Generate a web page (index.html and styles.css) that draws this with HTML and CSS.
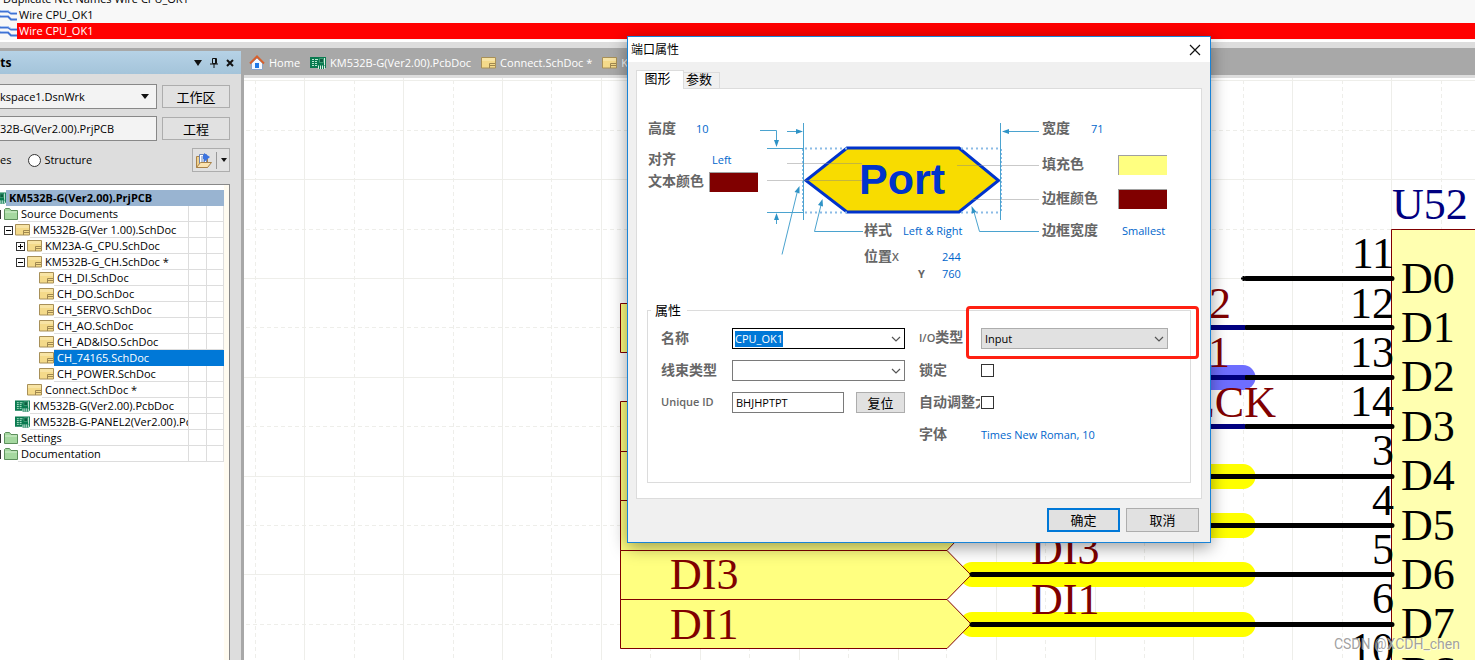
FILE: index.html
```
<!DOCTYPE html>
<html lang="zh-CN">
<head>
  <meta charset="utf-8">
  <title>端口属性</title>
  <link rel="stylesheet" href="styles.css">
</head>
<body>
  <!-- shared icons -->
  <svg class="sprite" aria-hidden="true">
    <symbol id="i-sch" viewBox="0 0 15 12">
      <path d="M.5.5h14v10.500H.5z" fill="#f4da8a" stroke="#a89058"/>
      <path d="M1 1h13v3H1z" fill="#f8e4a4"/>
      <path d="M8.500 11V6.500H14M9 8.500h5" fill="none" stroke="#a08850"/>
    </symbol>
    <symbol id="i-folder" viewBox="0 0 15 12">
      <path d="M1.500 11.500v-10l1-1h4l1.500 2h6.500v9z" fill="#a5d8a0" stroke="#5c8f5c"/>
      <path d="M2 4h12" stroke="#d4efd0"/>
    </symbol>
    <symbol id="i-pcb" viewBox="0 0 16 12">
      <path d="M0 0h16v11h-1v1H8v-1H0z" fill="#0a7a50"/>
      <path d="M2 2.500h2M2 4.500h2M2 6.500h2M2 8.500h2M5 2.500h3M5 4.500h2M5 6.500h2M5 8.500h2" stroke="#b8e8d0"/>
      <path d="M9.500 1.500h4v4h-4z" fill="#0c5c40" stroke="#3c9c74"/>
      <path d="M14.500 1v7" stroke="#d8f0e4"/>
      <path d="M8.500 8.500v3.500M10.500 8.500v3.500M12.500 8.500v3.500M14.500 8.500v3.500" stroke="#d8f0e4"/>
    </symbol>
    <symbol id="i-wire" viewBox="0 0 17 12">
      <path d="M0 2.500h8l3 2h6M0 7.500h8l3 3h6" fill="none" stroke="#3f72d4" stroke-width="2"/>
      <path d="M1 1.500h7l3 2h6M1 6.500h7" fill="none" stroke="#a8c4f4"/>
    </symbol>
    <symbol id="i-chevron" viewBox="0 0 10 6">
      <path d="M1 1l4 4 4-4" fill="none" stroke="#555" stroke-width="1.200"/>
    </symbol>
  </svg>

  <ul class="messages">
    <li class="first">Duplicate Net Names Wire CPU_OK1</li>
    <li><svg class="wire"><use href="#i-wire"/></svg><span>Wire CPU_OK1</span></li>
    <li class="error"><svg class="wire"><use href="#i-wire"/></svg><span>Wire CPU_OK1</span></li>
  </ul>

  <div class="workspace">
    <aside class="sidebar">
      <header class="panel-head">
        <h2>cts</h2>
        <button type="button" aria-label="Menu"><svg width="8" height="6"><path d="M0 0h8L4 6z" fill="#111"/></svg></button>
        <button type="button" aria-label="Pin"><svg width="8" height="10"><path d="M2.500.5h4v5h-4zM0 6h8M4 6v4M5.500 1v5" fill="none" stroke="#111"/></svg></button>
        <button type="button" aria-label="Close"><svg width="8" height="8"><path d="M1 1l6 6M7 1L1 7" stroke="#111" stroke-width="2"/></svg></button>
      </header>

      <div class="project-bar">
        <label class="combo">
          <select aria-label="Workspace"><option>kspace1.DsnWrk</option></select>
          <svg width="8" height="5"><path d="M0 0h8L4 5z" fill="#111"/></svg>
        </label>
        <button type="button" class="btn">工作区</button>
        <input type="text" class="project-name" value="32B-G(Ver2.00).PrjPCB" aria-label="Project">
        <button type="button" class="btn">工程</button>
      </div>

      <div class="view-bar">
        <span>es</span>
        <label><input type="radio" name="view"> Structure</label>
        <button type="button" class="open-btn" aria-label="Open">
          <svg width="18" height="17" viewBox="0 0 18 17">
            <path d="M1.500 15.500v-11h3l1 2h7v9z" fill="#f1d18c" stroke="#a8824a"/>
            <path d="M4.500 2.500h7v10h-7z" fill="#fff" stroke="#6d86b8"/>
            <path d="M6 5h4M6 7h4M6 9h4" stroke="#6d86b8"/>
            <path d="M9 3V1l6 4-6 5V7H8V3z" fill="#3c74e0"/>
            <path d="M1.500 15.500l4-5h11l-4 5z" fill="#fbe3b0" stroke="#a8824a"/>
          </svg>
          <i></i>
          <svg width="6" height="4"><path d="M0 0h6L3 4z" fill="#111"/></svg>
        </button>
      </div>

      <ul class="tree">
        <li class="root"><b></b><svg class="ico"><use href="#i-pcb"/></svg><span class="name">KM532B-G(Ver2.00).PrjPCB</span></li>
        <li class="l1"><b class="tg minus"></b><svg class="ico"><use href="#i-folder"/></svg><span class="name">Source Documents</span><i></i><i></i></li>
        <li class="l2"><b class="tg minus"></b><svg class="ico"><use href="#i-sch"/></svg><span class="name">KM532B-G(Ver 1.00).SchDoc</span><i></i><i></i></li>
        <li class="l3"><b class="tg plus"></b><svg class="ico"><use href="#i-sch"/></svg><span class="name">KM23A-G_CPU.SchDoc</span><i></i><i></i></li>
        <li class="l3"><b class="tg minus"></b><svg class="ico"><use href="#i-sch"/></svg><span class="name">KM532B-G_CH.SchDoc *</span><i></i><i></i></li>
        <li class="l4"><b></b><svg class="ico"><use href="#i-sch"/></svg><span class="name">CH_DI.SchDoc</span><i></i><i></i></li>
        <li class="l4"><b></b><svg class="ico"><use href="#i-sch"/></svg><span class="name">CH_DO.SchDoc</span><i></i><i></i></li>
        <li class="l4"><b></b><svg class="ico"><use href="#i-sch"/></svg><span class="name">CH_SERVO.SchDoc</span><i></i><i></i></li>
        <li class="l4"><b></b><svg class="ico"><use href="#i-sch"/></svg><span class="name">CH_AO.SchDoc</span><i></i><i></i></li>
        <li class="l4"><b></b><svg class="ico"><use href="#i-sch"/></svg><span class="name">CH_AD&amp;ISO.SchDoc</span><i></i><i></i></li>
        <li class="l4 selected"><b></b><svg class="ico"><use href="#i-sch"/></svg><span class="name">CH_74165.SchDoc</span></li>
        <li class="l4"><b></b><svg class="ico"><use href="#i-sch"/></svg><span class="name">CH_POWER.SchDoc</span><i></i><i></i></li>
        <li class="l3"><b></b><svg class="ico"><use href="#i-sch"/></svg><span class="name">Connect.SchDoc *</span><i></i><i></i></li>
        <li class="l2"><b></b><svg class="ico"><use href="#i-pcb"/></svg><span class="name">KM532B-G(Ver2.00).PcbDoc</span><i></i><i></i></li>
        <li class="l2"><b></b><svg class="ico"><use href="#i-pcb"/></svg><span class="name">KM532B-G-PANEL2(Ver2.00).PcbDoc</span><i></i><i></i></li>
        <li class="l1"><b class="tg plus"></b><svg class="ico"><use href="#i-folder"/></svg><span class="name">Settings</span><i></i><i></i></li>
        <li class="l1"><b class="tg plus"></b><svg class="ico"><use href="#i-folder"/></svg><span class="name">Documentation</span><i></i><i></i></li>
      </ul>
    </aside>

    <div class="splitter"></div>

    <main class="editor">
      <nav class="doc-tabs">
        <a href="#">
          <svg width="16" height="16" viewBox="0 0 16 16">
            <path d="M2.500 8v6.500h11V8L8 3z" fill="#f4f8ff" stroke="#8aa4c8"/>
            <path d="M6 8h4v5H6z" fill="#1e78e8"/>
            <path d="M1 8.500L8 1.500l7 7" fill="none" stroke="#d8602c" stroke-width="2"/>
          </svg>Home</a>
        <a href="#"><svg width="16" height="12"><use href="#i-pcb"/></svg>KM532B-G(Ver2.00).PcbDoc</a>
        <a href="#"><svg width="15" height="12"><use href="#i-sch"/></svg>Connect.SchDoc *</a>
        <a href="#"><svg width="15" height="12"><use href="#i-sch"/></svg>KM532B-G_CH.SchDoc *</a>
      </nav>

      <svg class="sheet" viewBox="244 78 1231 582" preserveAspectRatio="xMinYMin slice">
        <!-- grid -->
        <path class="grid" d="M244 80.500H1475M244 179.500H1475M244 278.500H1475M244 377.500H1475M244 476.500H1475M244 574.500H1475M304.500 78V660M403.500 78V660M502.500 78V660M601.500 78V660M700.500 78V660M799.500 78V660M898.500 78V660M996.500 78V660M1095.500 78V660M1193.500 78V660M1292.500 78V660M1391.500 78V660"/>
        <path class="grid dash" d="M246 130.500H1475M246 229.500H1475M246 327.500H1475M246 426.500H1475M246 525.500H1475M246 624.500H1475M255.500 80V660M354.500 80V660M453.500 80V660M551.500 80V660M650.500 80V660M749.500 80V660M848.500 80V660M946.500 80V660M1045.500 80V660M1144.500 80V660M1243.500 80V660M1342.500 80V660M1441.500 80V660"/>

        <!-- net highlights -->
        <path class="glow" d="M972 476.500H1243M972 525.500H1243M972 574.500H1243M972 624.500H1243"/>
        <path class="glow picked" d="M972 377.500H1243"/>

        <!-- ports -->
        <path class="port" d="M620.500 303.500H947L971 328 947 352.500H620.500zM620.500 401.500H947L971 426 947 451.500H620.500zM620.500 451.500H947L971 476 947 500.500H620.500zM620.500 500.500H947L971 525 947 550.500H620.500zM620.500 550.500H947L971 575 947 599.500H620.500zM620.500 599.500H947L971 624 947 648.500H620.500z"/>
        <g class="net">
          <text x="670" y="589">DI3</text>
          <text x="670" y="639">DI1</text>
        </g>

        <!-- component -->
        <path class="body" d="M1391.500 229.500H1500V700H1391.500z"/>
        <text class="refdes" x="1392" y="219">U52</text>
        <path class="pin" d="M1246 278.500H1392M1246 327.500H1392M1246 377.500H1392M1246 426.500H1392M972 476.500H1392M972 525.500H1392M972 574.500H1392M972 624.500H1392"/>
        <path d="M1241 278.500h6M1243.500 276v5" stroke="#000" stroke-width="2"/>
        <path class="wire-line" d="M972 327.500H1245M972 377.500H1245M972 426.500H1245"/>
        <g class="pin-no">
          <text x="1394" y="268">11</text>
          <text x="1394" y="318">12</text>
          <text x="1394" y="367">13</text>
          <text x="1394" y="416">14</text>
          <text x="1394" y="465">3</text>
          <text x="1394" y="515">4</text>
          <text x="1394" y="564">5</text>
          <text x="1394" y="613">6</text>
          <text x="1394" y="663">10</text>
        </g>
        <g class="pin-name">
          <text x="1401" y="293">D0</text>
          <text x="1401" y="342">D1</text>
          <text x="1401" y="391">D2</text>
          <text x="1401" y="441">D3</text>
          <text x="1401" y="490">D4</text>
          <text x="1401" y="540">D5</text>
          <text x="1401" y="589">D6</text>
          <text x="1401" y="638">D7</text>
          <text x="1401" y="687">DS</text>
        </g>
        <g class="net">
          <text x="1031" y="564">DI3</text>
          <text x="1031" y="614">DI1</text>
          <text x="1231" y="318" text-anchor="end">2</text>
          <text x="1230" y="367" text-anchor="end">1</text>
          <text x="1276" y="417" text-anchor="end">CLCK</text>
        </g>
      </svg>
    </main>
  </div>

  <form class="dialog" role="dialog" aria-labelledby="dialog-title">
    <header class="dialog-head">
      <h1 id="dialog-title">端口属性</h1>
      <button type="button" aria-label="关闭"><svg width="12" height="12"><path d="M1 1l10 10M11 1L1 11" stroke="#111" stroke-width="1.200"/></svg></button>
    </header>

    <div class="dialog-tabs">
      <button type="button" class="tab active">图形</button>
      <button type="button" class="tab">参数</button>
    </div>

    <div class="page">
      <div class="graphic">
        <div class="props left">
          <div><span class="lbl">高度</span><a href="#">10</a></div>
          <div><span class="lbl">对齐</span><a href="#">Left</a></div>
          <div><span class="lbl">文本颜色</span><button type="button" class="swatch maroon" aria-label="文本颜色"></button></div>
        </div>

        <svg class="diagram" viewBox="758 89 284 200">
          <path d="M847 148H959L998.500 180.500 959 212H847L806 180.500z" fill="#f8dc00" stroke="#03c" stroke-width="3"/>
          <path d="M787 163.500H862M767 180.500H862M957 165.500H1039M972 199.500H1039" stroke="#888" stroke-opacity=".45" fill="none"/>
          <text class="port-text" x="859" y="194">Port</text>
          <path d="M805 148.500H847M805 212.500H847M961 148.500H1000M961 212.500H1000" stroke="#8bbbe6" stroke-width="2" stroke-dasharray="2 3"/>
          <path d="M803 149V212M1001 149V212" stroke="#8bbbe6" stroke-width="2" stroke-dasharray="2 2"/>
          <g fill="none" stroke="#4ba3cf">
            <path d="M760 130.500H776.500V142M787 131.500H797M767 148.500H803M767 212.500H803M776.500 224V219M803.500 123V220M1000.500 123V220M1039 131.500H1008"/>
            <path d="M782 254.500L797 193M863 231.500H814.500L821 205M1039 231.500H979.500L974 212"/>
          </g>
          <path fill="#2f93c6" d="M774 140h5l-2.500 7zM796 129l7 2.500-7 2.500zM774 220h5l-2.500-7zM1009 129l-7 2.500 7 2.500zM799.500 186l-5 6 5 1.500zM822.500 199l-4.500 6 5 1.500zM971.500 206l.5 7.500 4.500-1.500z"/>
          <text class="cap" x="864" y="235">样式</text>
          <text class="val" x="903" y="235">Left &amp; Right</text>
          <text class="cap" x="864" y="261">位置<tspan class="latin">X</tspan></text>
          <text class="val" x="942" y="261">244</text>
          <text class="cap latin" x="918" y="278">Y</text>
          <text class="val" x="942" y="278">760</text>
        </svg>

        <div class="props right">
          <div><span class="lbl">宽度</span><a href="#">71</a></div>
          <div><span class="lbl">填充色</span><button type="button" class="swatch yellow" aria-label="填充色"></button></div>
          <div><span class="lbl">边框颜色</span><button type="button" class="swatch maroon" aria-label="边框颜色"></button></div>
          <div><span class="lbl">边框宽度</span><a href="#">Smallest</a></div>
        </div>
      </div>

      <fieldset>
        <legend>属性</legend>
        <div class="fields">
          <label class="lbl" for="port-name">名称</label>
          <div class="combo-edit focused">
            <input type="text" id="port-name" value="CPU_OK1">
            <svg width="10" height="6"><use href="#i-chevron"/></svg>
          </div>
          <label class="lbl" for="harness">线束类型</label>
          <div class="combo-edit">
            <input type="text" id="harness">
            <svg width="10" height="6"><use href="#i-chevron"/></svg>
          </div>
          <label class="lbl latin" for="uid">Unique ID</label>
          <div class="uid-row">
            <input type="text" id="uid" value="BHJHPTPT">
            <button type="button" class="btn">复位</button>
          </div>
        </div>
        <div class="fields second">
          <label class="lbl" for="io-type"><span class="latin">I/O</span>类型</label>
          <div class="io-select">
            <select id="io-type"><option>Input</option></select>
            <svg width="10" height="6"><use href="#i-chevron"/></svg>
          </div>
          <label class="lbl" for="locked">锁定</label>
          <input type="checkbox" id="locked">
          <label class="lbl" for="autosize">自动调整大小</label>
          <input type="checkbox" id="autosize">
          <span class="lbl">字体</span>
          <a href="#">Times New Roman, 10</a>
        </div>
        <div class="marker"></div>
      </fieldset>
    </div>

    <footer>
      <button type="button" class="btn default">确定</button>
      <button type="button" class="btn">取消</button>
    </footer>
  </form>

  <div class="watermark">CSDN @XCDH_chen</div>

  <script>
    document.getElementById('port-name').select();
  </script>
</body>
</html>
```
FILE: styles.css
```
* {
  box-sizing: border-box;
}
body {
  margin: 0;
  height: 100vh;
  display: flex;
  flex-direction: column;
  overflow: hidden;
  background: #ddd;
  font: 11px/16px "Open Sans", "Noto Sans CJK SC", sans-serif;
  color: #000;
}
ul {
  margin: 0;
  padding: 0;
  list-style: none;
}
button, input, select {
  font: inherit;
  color: inherit;
  margin: 0;
  padding: 0;
  border-radius: 0;
}
a {
  color: #06c;
  text-decoration: none;
}
.sprite {
  display: none;
}

/* messages */
.messages {
  height: 42px;
  flex: none;
  overflow: hidden;
  background: #f8f8f8;
  border-bottom: 2px solid #fff;
}
.messages li {
  display: flex;
  height: 16px;
}
.messages .first {
  margin-top: -9px;
  padding-left: 3px;
}
.messages span {
  flex: 1;
  padding-left: 2px;
}
.messages .error span {
  background: #f00;
  color: #fff;
}
.wire {
  width: 17px;
  height: 12px;
  margin-top: 2px;
}

.workspace {
  flex: 1;
  min-height: 0;
  display: flex;
  margin-top: 6px;
}

/* projects panel */
.sidebar {
  width: 241px;
  flex: none;
  display: flex;
  flex-direction: column;
  overflow: hidden;
  border-top: 3px solid #a8a8a8;
}
.panel-head {
  display: flex;
  align-items: center;
  gap: 8px;
  height: 23px;
  padding-right: 7px;
  background: linear-gradient(#b6d2e6, #a4c4da);
}
.panel-head h2 {
  flex: 1;
  margin: 0 0 0 -6px;
  font-size: 12px;
}
.panel-head button {
  display: flex;
  border: 0;
  background: none;
}
.project-bar {
  display: grid;
  grid-template-columns: 157px 68px;
  align-items: center;
  gap: 7px 5px;
  padding-top: 10px;
}
.btn {
  height: 23px;
  border: 1px solid #adadad;
  background: #e1e1e1;
  font-size: 13px;
  line-height: 18px;
}
.combo {
  display: flex;
  align-items: center;
  height: 25px;
  padding-right: 7px;
  border: 1px solid #888;
  border-left: 0;
  background: #f3f3f3;
}
.combo select {
  flex: 1;
  appearance: none;
  border: 0;
  background: none;
}
.project-name {
  width: 157px;
  height: 25px;
  border: 1px solid #888;
  border-left: 0;
  background: #f3f3f3;
}
.view-bar {
  display: flex;
  align-items: center;
  height: 24px;
  margin: 7px 11px 12px 0;
}
.view-bar label {
  display: flex;
  align-items: center;
  gap: 3px;
  margin-left: 17px;
}
.view-bar input {
  appearance: none;
  width: 13px;
  height: 13px;
  border: 1px solid #333;
  border-radius: 50%;
  background: #fff;
}
.open-btn {
  display: flex;
  align-items: center;
  gap: 4px;
  width: 38px;
  height: 24px;
  margin-left: auto;
  padding-left: 2px;
  border: 1px solid #adadad;
  background: #e1e1e1;
}
.open-btn i {
  width: 1px;
  height: 17px;
  margin-left: -1px;
  background: #999;
}
.tree {
  flex: 1;
  width: 250px;
  margin-left: -20px;
  padding-top: 5px;
  border-top: 1px solid #888;
  border-right: 1px solid #888;
  background: linear-gradient(90deg, #fff 244px, #fffbf0 244px);
}
.tree li {
  display: flex;
  align-items: center;
  height: 16px;
  width: 244px;
}
.tree b {
  width: 9px;
  height: 9px;
  margin-right: 2px;
}
.tree .tg {
  border: 1px solid #333;
  background: linear-gradient(#000, #000) center / 5px 1px no-repeat #fff;
}
.tree .plus {
  background: linear-gradient(#000, #000) center / 5px 1px no-repeat, linear-gradient(#000, #000) center / 1px 5px no-repeat #fff;
}
.tree .ico {
  flex: none;
  width: 15px;
  height: 12px;
}
.tree .name {
  flex: 1;
  height: 16px;
  min-width: 0;
  padding-left: 3px;
  overflow: hidden;
  white-space: nowrap;
  border-bottom: 1px solid #ddd;
}
.tree i {
  width: 18px;
  height: 16px;
  border-left: 1px solid #ddd;
  border-bottom: 1px solid #ddd;
}
.tree i:last-child {
  border-right: 1px solid #ddd;
}
.tree .l1 {
  padding-left: 12px;
}
.tree .l2 {
  padding-left: 24px;
}
.tree .l3 {
  padding-left: 36px;
}
.tree .l4 {
  padding-left: 48px;
}
.tree .root .name {
  background: #99b4d1;
  border: 0;
  font-weight: bold;
}
.tree .selected .name {
  background: #0078d7;
  border: 0;
  color: #fff;
}
.splitter {
  width: 3px;
  background: #a8a8a8;
}

/* editor */
.editor {
  flex: 1;
  min-width: 0;
  display: flex;
  flex-direction: column;
}
.doc-tabs {
  flex: none;
  display: flex;
  gap: 10px;
  height: 30px;
  padding: 2px 0 0 5px;
  background: #a8a8a8;
  border-bottom: 3px solid #ddd;
  white-space: nowrap;
}
.doc-tabs a {
  display: flex;
  align-items: center;
  gap: 4px;
  color: #fff;
}
.sheet {
  flex: 1;
  width: 100%;
  min-height: 0;
  background: #fff;
  font-family: "Liberation Serif", serif;
  font-size: 44px;
}
.grid {
  fill: none;
  stroke: #eeeeea;
}
.dash {
  stroke-dasharray: 4 3;
}
.glow {
  stroke: #ff0;
  stroke-width: 25px;
  stroke-linecap: round;
}
.picked {
  stroke: #6e6eff;
}
.port {
  fill: #ffff80;
  stroke: #800000;
}
.body {
  fill: #ffffb0;
  stroke: #800000;
}
.refdes {
  fill: #000080;
}
.pin {
  stroke: #000;
  stroke-width: 5px;
  stroke-linecap: round;
}
.wire-line {
  stroke: #000080;
  stroke-width: 5px;
}
.pin-no {
  text-anchor: end;
}
.net {
  fill: #800000;
}

/* port dialog */
.dialog {
  position: absolute;
  left: 627px;
  top: 36px;
  width: 584px;
  border: 1px solid #1883d7;
  background: #f0f0f0;
  box-shadow: 0 4px 16px rgba(0, 0, 0, 0.4);
}
.dialog-head {
  display: flex;
  align-items: center;
  justify-content: space-between;
  height: 25px;
  padding: 0 9px 0 3px;
  background: #fff;
}
.dialog-head h1 {
  margin: 0;
  font-size: 12px;
  font-weight: normal;
}
.dialog-head button {
  display: flex;
  border: 0;
  background: none;
}
.dialog-tabs {
  display: flex;
  align-items: flex-end;
  height: 26px;
  padding-left: 8px;
}
.tab {
  width: 36px;
  height: 16px;
  padding: 0 5px 3px 0;
  border: 1px solid #dcdcdc;
  border-width: 1px 1px 0 0;
  background: #f0f0f0;
  font-size: 13px;
  line-height: 12px;
}
.tab.active {
  position: relative;
  width: 48px;
  height: 19px;
  margin-bottom: -1px;
  padding-bottom: 5px;
  border-left-width: 1px;
  background: #fff;
}
.page {
  margin: 0 8px;
  padding: 0 10px 15px;
  border: 1px solid #dcdcdc;
  background: #fff;
}
.graphic {
  display: flex;
  height: 211px;
  padding-left: 1px;
}
.props {
  padding-top: 30px;
}
.props div {
  display: flex;
  align-items: center;
  height: 20px;
}
.left {
  width: 110px;
}
.left .lbl {
  min-width: 48px;
}
.left div:nth-child(2) {
  margin: 11px 0 2px;
}
.left div:nth-child(2) a {
  margin-left: 16px;
}
.left .swatch {
  margin-left: 5px;
}
.right .lbl {
  width: 49px;
}
.right div:nth-child(2) {
  margin: 16px 0 14px;
}
.right div:nth-child(4) {
  margin-top: 12px;
}
.right .swatch {
  margin-left: 27px;
}
.right div:nth-child(4) a {
  margin-left: 31px;
}
.lbl {
  flex: none;
  padding-bottom: 2px;
  color: #666;
  font-size: 14px;
  font-weight: bold;
  white-space: nowrap;
}
.latin {
  font-size: 11px;
  font-weight: 600;
}
.swatch {
  width: 49px;
  height: 20px;
  border: 1px solid #a0a0a0;
  border-width: 1px 0 0 1px;
}
.maroon {
  background: #800000;
}
.yellow {
  background: #ffff80;
}
.diagram {
  flex: none;
  width: 284px;
  height: 200px;
}
.port-text {
  fill: #03c;
  font: bold 43px "Liberation Sans", sans-serif;
}
.cap {
  fill: #666;
  font-size: 14px;
  font-weight: bold;
}
.diagram .latin {
  font-size: 11px;
}
.val {
  fill: #06c;
  font-size: 11px;
}
fieldset {
  position: relative;
  display: flex;
  gap: 14px;
  margin: 0;
  padding: 8px 13px 37px;
  border: 1px solid #dcdcdc;
}
legend {
  margin-left: -10px;
  padding: 0 6px 0 4px;
  font-size: 13px;
  line-height: 20px;
}
.fields {
  display: grid;
  grid-template-columns: 71px 173px;
  grid-auto-rows: 21px;
  gap: 11px 0;
  align-items: center;
}
.second {
  grid-template-columns: 62px 187px;
}
.second .lbl {
  width: 61px;
  overflow: hidden;
}
.combo-edit, .io-select {
  display: flex;
  align-items: center;
  height: 21px;
  padding-right: 3px;
  border: 1px solid #7a7a7a;
}
.focused {
  border-color: #000;
}
.combo-edit input {
  flex: 1;
  min-width: 0;
  padding-left: 2px;
  border: 0;
  outline: 0;
  caret-color: transparent;
}
.combo-edit input::selection {
  background: #0078d7;
  color: #fff;
}
.uid-row {
  display: flex;
  justify-content: space-between;
}
.uid-row input {
  width: 112px;
  height: 21px;
  padding-left: 3px;
  border: 1px solid #7a7a7a;
}
.uid-row .btn {
  width: 49px;
  height: 21px;
}
.io-select {
  border-color: #adadad;
  background: #e1e1e1;
}
.io-select select {
  flex: 1;
  appearance: none;
  padding-left: 3px;
  border: 0;
  background: none;
}
.second input {
  appearance: none;
  width: 13px;
  height: 13px;
  border: 1px solid #333;
  background: #fff;
}
/* red frame round the I/O type */
.marker {
  position: absolute;
  top: -14px;
  right: -9px;
  width: 233px;
  height: 53px;
  border: 3px solid #ff2012;
  border-radius: 4px;
  pointer-events: none;
}
.dialog footer {
  display: flex;
  justify-content: flex-end;
  gap: 6px;
  padding: 9px 11px 10px;
}
.dialog footer .btn {
  width: 73px;
  height: 24px;
}
.dialog footer .default {
  border: 2px solid #0078d7;
  line-height: 16px;
}

.watermark {
  position: absolute;
  right: 15px;
  bottom: 7px;
  color: rgba(150, 150, 150, 0.9);
  font: 14px/18px Roboto, sans-serif;
  text-shadow: 1px 1px 0 rgba(255, 255, 255, 0.7);
}
```
